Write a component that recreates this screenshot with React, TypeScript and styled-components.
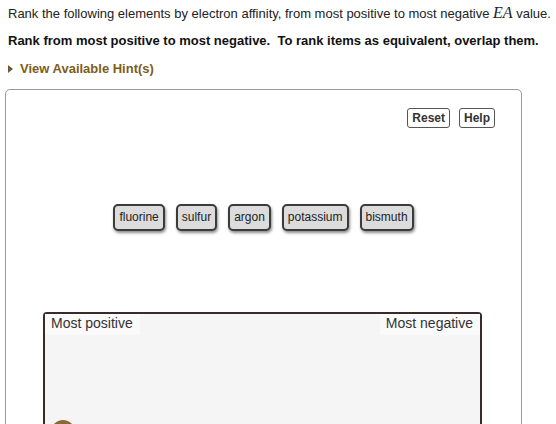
import styled, { createGlobalStyle } from 'styled-components'

const GlobalStyle = createGlobalStyle`
  html, body {
    margin: 0;
    padding: 0;
    background: #fff;
    overflow: hidden;
  }
  body {
    font-family: 'Liberation Sans', Arial, sans-serif;
    color: #222;
  }
`;

const Page = styled.div`
  width: 556px;
  height: 424px;
  overflow: hidden;
  padding: 4px 0 0 8px;
  box-sizing: border-box;
`;

const Prompt = styled.p`
  margin: 0;
  font-size: 13px;
  line-height: 18px;
  white-space: nowrap;
`;

const MathVar = styled.span`
  font-family: 'Liberation Serif', 'Times New Roman', serif;
  font-style: italic;
  font-size: 16px;
`;

const Instruction = styled.p`
  margin: 9px 0 0;
  font-size: 13px;
  line-height: 18px;
  font-weight: bold;
  color: #111;
  white-space: nowrap;
`;

const HintToggle = styled.div`
  margin-top: 10px;
  display: flex;
  align-items: center;
  gap: 7px;
  font-size: 13px;
  line-height: 18px;
  font-weight: bold;
  color: #7d5d17;
`;

const Caret = styled.span`
  width: 0;
  height: 0;
  border-top: 4px solid transparent;
  border-bottom: 4px solid transparent;
  border-left: 5px solid #6b5a3a;
`;

const Panel = styled.div`
  margin: 11px 0 0 -3px;
  width: 517px;
  height: 360px;
  border: 1px solid #9a9a9a;
  border-radius: 5px;
  box-sizing: border-box;
  display: flex;
  flex-direction: column;
`;

const Toolbar = styled.div`
  display: flex;
  justify-content: flex-end;
  gap: 9px;
  padding: 18px 26px 0 0;
`;

const SmallButton = styled.button`
  font-family: 'Liberation Sans', Arial, sans-serif;
  font-size: 12px;
  font-weight: bold;
  color: #333;
  background: #fff;
  border: 1px solid #555;
  border-radius: 3px;
  padding: 0 4px;
  height: 20px;
  line-height: 18px;
`;

const Tray = styled.div`
  display: flex;
  justify-content: center;
  gap: 11px;
  margin: 76px 0 0 0;
`;

const Chip = styled.div`
  font-size: 12px;
  color: #222;
  background: #dcdcdc;
  border: 2px solid #3b3b3b;
  border-radius: 5px;
  padding: 0 4px;
  height: 23px;
  line-height: 23px;
  box-shadow: 1px 2px 3px rgba(0, 0, 0, 0.45);
`;

const RankBox = styled.div`
  margin: 81px 0 0 37px;
  width: 439px;
  flex: 1;
  background: #f5f5f5;
  border: 2px solid #3a2b2b;
  border-bottom: none;
  border-radius: 4px 4px 0 0;
  display: flex;
  justify-content: space-between;
  align-items: flex-start;
  box-sizing: border-box;
`;

const EndLabel = styled.span`
  font-size: 14px;
  line-height: 18px;
  color: #333;
  background: #fafafa;
  padding: 0 7px 3px 6px;
`;

const Dot = styled.div`
  position: absolute;
  left: 51px;
  top: 420px;
  width: 24px;
  height: 24px;
  border-radius: 50%;
  background: #8a6a30;
`;

const elements = ['fluorine', 'sulfur', 'argon', 'potassium', 'bismuth'];

export default function App() {
  return (
    <Page>
      <GlobalStyle />
      <Prompt>
        Rank the following elements by electron affinity, from most positive to most negative <MathVar>EA</MathVar> value.
      </Prompt>
      <Instruction>
        Rank from most positive to most negative.&nbsp; To rank items as equivalent, overlap them.
      </Instruction>
      <HintToggle>
        <Caret />
        View Available Hint(s)
      </HintToggle>
      <Panel>
        <Toolbar>
          <SmallButton>Reset</SmallButton>
          <SmallButton>Help</SmallButton>
        </Toolbar>
        <Tray>
          {elements.map((el) => (
            <Chip key={el}>{el}</Chip>
          ))}
        </Tray>
        <RankBox>
          <EndLabel>Most positive</EndLabel>
          <EndLabel>Most negative</EndLabel>
        </RankBox>
      </Panel>
      <Dot />
    </Page>
  );
}
